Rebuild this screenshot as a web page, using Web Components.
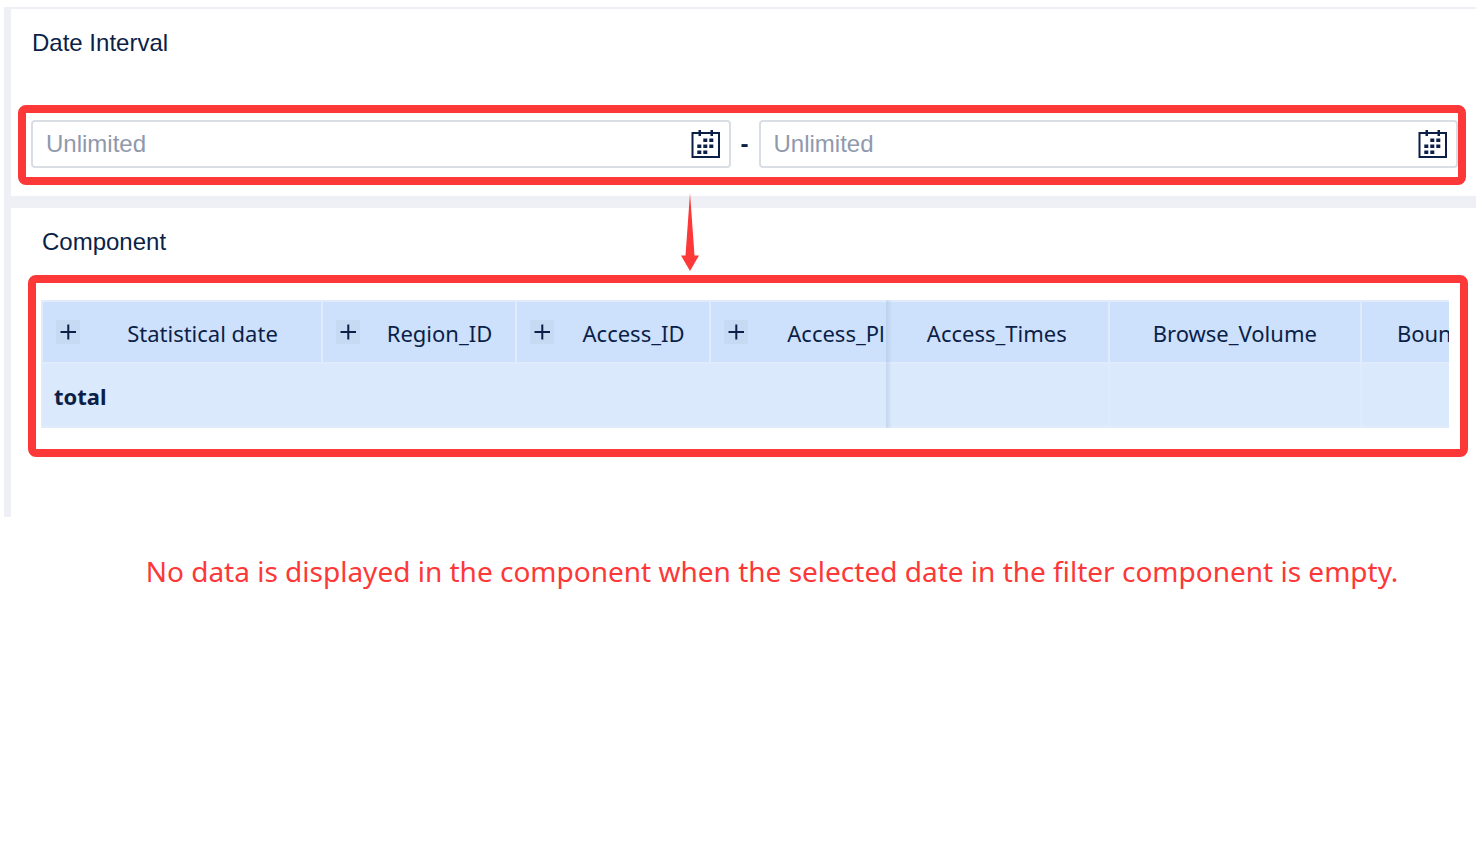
<!DOCTYPE html>
<html lang="en">
<head>
<meta charset="utf-8">
<title>Date Interval</title>
<style>
  body { margin: 0; background: #fff; color: #0b1f47; font-family: "Liberation Sans", Arial, sans-serif; font-size: 24px; }
</style>
</head>
<body>
<demo-board>
  <board-panel heading="Date Interval">
    <mark-frame class="filter">
      <date-range></date-range>
    </mark-frame>
  </board-panel>
  <board-panel heading="Component" class="inset">
    <mark-frame class="data">
      <pinned-table></pinned-table>
    </mark-frame>
  </board-panel>
</demo-board>
<note-caption>No data is displayed in the component when the selected date in the filter component is empty.</note-caption>

<script>
class BaseElement extends HTMLElement {
  connectedCallback() {
    if (this.shadowRoot) return;
    this.attachShadow({ mode: "open" }).innerHTML = this.render();
  }
}

customElements.define("demo-board", class extends BaseElement {
  render() {
    return `
    <style>
      :host { display: flex; flex-direction: column; gap: 12px; position: relative; margin: 7px 6px 0 4px; padding: 2px 0 0 7px; background: #eff0f5; }
      .arrow { position: absolute; left: 46%; top: 186px; width: 18px; height: 78px; }
    </style>
    <slot></slot>
    <svg class="arrow" viewBox="0 0 18 78" aria-hidden="true"><path d="M9 0 L13.5 62.5 H18 L9 78 L0 62.5 H4.500 Z" fill="#fc3838"/></svg>`;
  }
});

customElements.define("board-panel", class extends BaseElement {
  render() {
    return `
    <style>
      :host { display: block; background: #fff; padding: 20px 10px 11px 7px; }
      :host(.inset) { padding: 20px 8px 60px 17px; }
      h2 { margin: 0 0 48px 14px; font-size: 24px; line-height: 28px; font-weight: 400; }
      :host(.inset) h2 { margin-bottom: 19px; }
    </style>
    <h2>${this.getAttribute("heading")}</h2>
    <slot></slot>`;
  }
});

customElements.define("mark-frame", class extends BaseElement {
  render() {
    return `
    <style>
      :host { display: block; border: 8px solid #fc3838; border-radius: 8px; }
      :host(.filter) { padding: 7px 0 9px 5px; }
      :host(.data) { padding: 17px 11px 21px 5px; }
    </style>
    <slot></slot>`;
  }
});

customElements.define("date-range", class extends BaseElement {
  render() {
    return `
    <style>
      :host { display: flex; align-items: center; }
      date-field { flex: 1; }
      .dash { width: 28px; text-align: center; line-height: 28px; font-weight: 700; }
    </style>
    <date-field label="Start date"></date-field>
    <span class="dash">-</span>
    <date-field label="End date"></date-field>`;
  }
});

customElements.define("date-field", class extends BaseElement {
  render() {
    return `
    <style>
      :host { display: flex; align-items: center; box-sizing: border-box; height: 48px; min-width: 0; border: 2px solid #d9dde4; border-radius: 4px; background: #fff; padding-right: 8px; }
      input { flex: 1; min-width: 0; height: 44px; box-sizing: border-box; border: 0; outline: 0; padding: 0 13px; background: none; font: inherit; color: inherit; }
      input::placeholder { color: #8f99ac; opacity: 1; }
      button { display: block; border: 0; padding: 0; background: none; color: inherit; cursor: pointer; }
      svg { display: block; width: 30px; height: 30px; }
    </style>
    <input type="text" placeholder="Unlimited" aria-label="${this.getAttribute("label")}">
    <button type="button" aria-label="Open calendar">
      <svg viewBox="0 0 30 30" fill="currentColor" aria-hidden="true">
        <path fill-rule="evenodd" d="M0.500 3H29V29H0.500ZM2.500 5V27H27V5Z"/>
        <path d="M7.500 1h2.500v6h-2.500zM19.500 1h2.500v6h-2.500z"/>
        <path d="M12.300 9.500h4v3.600h-4zM18.300 9.500h4v3.600h-4zM6.300 15.500h4v3.600h-4zM12.300 15.500h4v3.600h-4zM18.300 15.500h4v3.600h-4zM6.300 21.500h4v3.600h-4zM12.300 21.500h4v3.600h-4z"/>
      </svg>
    </button>`;
  }
});

customElements.define("expand-head", class extends BaseElement {
  render() {
    return `
    <style>
      :host { display: flex; align-items: center; gap: 4px; padding-left: 13px; }
      button { flex: none; width: 24px; height: 24px; margin-bottom: 2px; padding: 4px; border: 0; background: #c6daf4; color: inherit; cursor: pointer; }
      svg { display: block; width: 16px; height: 16px; }
      span { flex: 1; text-align: center; }
    </style>
    <button type="button" aria-label="Expand"><svg viewBox="0 0 16 16" fill="none" stroke="currentColor" stroke-width="2" aria-hidden="true"><path d="M0.500 8H16M8.300 0.500V15.500"/></svg></button>
    <span><slot></slot></span>`;
  }
});

customElements.define("pinned-table", class extends BaseElement {
  render() {
    return `
    <style>
      :host { display: flex; overflow: hidden; font-family: "Noto Sans", "Open Sans", sans-serif; font-size: 22px; line-height: 32px; }
      .pane { overflow: hidden; min-width: 0; }
      .pinned { flex: 0 0 60%; }
      .rest { flex: 1; position: relative; }
      .rest::before { content: ""; position: absolute; z-index: 1; left: 0; top: 0; bottom: 0; width: 6px; background: linear-gradient(90deg, #a0b8d866, #a0b8d800); }
      table { table-layout: fixed; border-collapse: separate; border-spacing: 0; border-top: 2px solid #e0ebfc; }
      .pinned table { width: 881px; border-left: 2px solid #e0ebfc; }
      .rest table { width: 603px; }
      th, td { box-sizing: border-box; padding: 0; border-right: 2px solid #e0ebfc; border-bottom: 2px solid #e0ebfc; white-space: nowrap; font-weight: 400; }
      thead th { height: 62px; background: #cde0fc; padding-top: 2px; }
      tbody th, tbody td { height: 64px; background: #dbe9fd; }
      tbody th { padding-top: 2px; padding-left: 11px; text-align: left; font-weight: 700; }
    </style>
    <div class="pane pinned">
      <table>
        <colgroup><col style="width:280px"><col style="width:194px"><col style="width:194px"><col style="width:211px"></colgroup>
        <thead><tr>
          <th scope="col"><expand-head>Statistical date</expand-head></th>
          <th scope="col"><expand-head>Region_ID</expand-head></th>
          <th scope="col"><expand-head>Access_ID</expand-head></th>
          <th scope="col"><expand-head>Access_Pl</expand-head></th>
        </tr></thead>
        <tbody><tr><th scope="row" colspan="4">total</th></tr></tbody>
      </table>
    </div>
    <div class="pane rest">
      <table>
        <colgroup><col style="width:224px"><col style="width:252px"><col style="width:127px"></colgroup>
        <thead><tr><th scope="col">Access_Times</th><th scope="col">Browse_Volume</th><th scope="col">Boun</th></tr></thead>
        <tbody><tr><td></td><td></td><td></td></tr></tbody>
      </table>
    </div>`;
  }
});

customElements.define("note-caption", class extends BaseElement {
  render() {
    return `
    <style>
      :host { display: block; padding: 34px 0 0 62px; text-align: center; color: #fc3838; font-family: "Noto Sans", "Open Sans", sans-serif; font-size: 28px; line-height: 40px; }
      p { margin: 0; }
    </style>
    <p><slot></slot></p>`;
  }
});
</script>
</body>
</html>
